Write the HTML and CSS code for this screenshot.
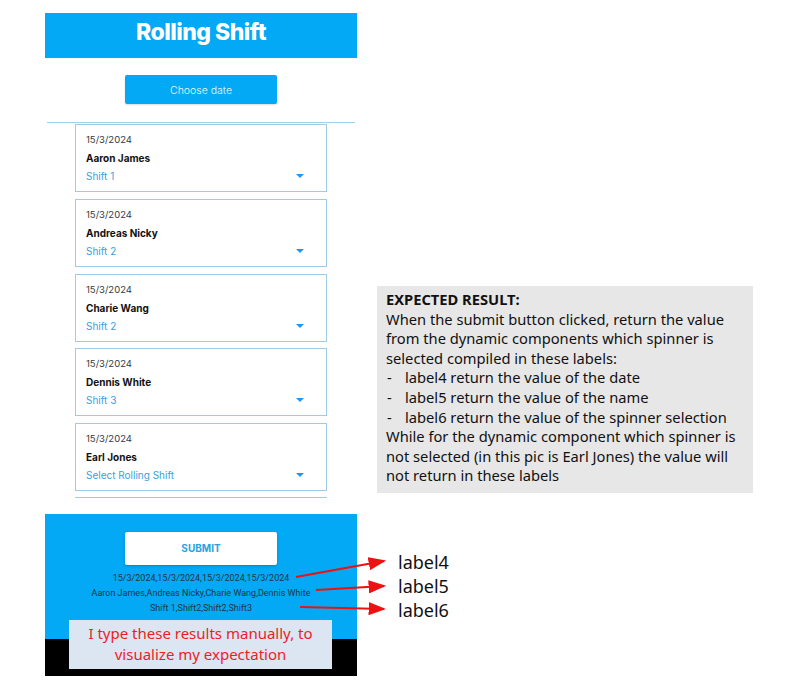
FILE: index.html
```html
<!DOCTYPE html>
<html lang="en">
<head>
    <meta charset="UTF-8">
    <title>Rolling Shift</title>
    <link rel="stylesheet" href="styles.css">
</head>
<body>
    <div class="page">
        <div class="phone">
            <header class="app-bar">
                <h1>Rolling Shift</h1>
            </header>
            <div class="date-row">
                <button class="btn-date">Choose date</button>
            </div>
            <hr class="divider">
            <div class="shift-list">
                <div class="shift-card">
                    <div class="shift-date">15/3/2024</div>
                    <div class="shift-name">Aaron James</div>
                    <div class="shift-spinner"><span>Shift 1</span><i class="caret"></i></div>
                </div>
                <div class="shift-card">
                    <div class="shift-date">15/3/2024</div>
                    <div class="shift-name">Andreas Nicky</div>
                    <div class="shift-spinner"><span>Shift 2</span><i class="caret"></i></div>
                </div>
                <div class="shift-card">
                    <div class="shift-date">15/3/2024</div>
                    <div class="shift-name">Charie Wang</div>
                    <div class="shift-spinner"><span>Shift 2</span><i class="caret"></i></div>
                </div>
                <div class="shift-card">
                    <div class="shift-date">15/3/2024</div>
                    <div class="shift-name">Dennis White</div>
                    <div class="shift-spinner"><span>Shift 3</span><i class="caret"></i></div>
                </div>
                <div class="shift-card">
                    <div class="shift-date">15/3/2024</div>
                    <div class="shift-name">Earl Jones</div>
                    <div class="shift-spinner"><span>Select Rolling Shift</span><i class="caret"></i></div>
                </div>
                <div class="list-end"></div>
            </div>
            <footer class="bottom">
                <div class="bottom-blue">
                    <button class="btn-submit">SUBMIT</button>
                    <div class="result" id="label4">15/3/2024,15/3/2024,15/3/2024,15/3/2024</div>
                    <div class="result" id="label5">Aaron James,Andreas Nicky,Charie Wang,Dennis White</div>
                    <div class="result" id="label6">Shift 1,Shift2,Shift2,Shift3</div>
                </div>
                <div class="bottom-black"></div>
                <div class="annotation">I type these results manually, to<br>visualize my expectation</div>
            </footer>
        </div>
        <div class="side">
            <div class="expected">
                <strong>EXPECTED RESULT:</strong>
                <p>When the submit button clicked, return the value from the dynamic components which spinner is selected compiled in these labels:</p>
                <ul>
                    <li>label4 return the value of the date</li>
                    <li>label5 return the value of the name</li>
                    <li>label6 return the value of the spinner selection</li>
                </ul>
                <p>While for the dynamic component which spinner is not selected (in this pic is Earl Jones) the value will not return in these labels</p>
            </div>
            <div class="labels">
                <div>label4</div>
                <div>label5</div>
                <div>label6</div>
            </div>
        </div>
        <svg class="arrows" width="788" height="691" viewBox="0 0 788 691">
            <defs>
                <marker id="head" markerWidth="8" markerHeight="6" refX="7" refY="3" orient="auto" markerUnits="strokeWidth">
                    <path d="M0,0 L8,3 L0,6 z" fill="#ee1111"/>
                </marker>
            </defs>
            <line x1="296" y1="577" x2="384" y2="561" stroke="#ee1111" stroke-width="2.2" marker-end="url(#head)"/>
            <line x1="316" y1="590" x2="384" y2="586" stroke="#ee1111" stroke-width="2.2" marker-end="url(#head)"/>
            <line x1="300" y1="607" x2="384" y2="609" stroke="#ee1111" stroke-width="2.2" marker-end="url(#head)"/>
        </svg>
    </div>
</body>
</html>
```

FILE: styles.css
```css
* { box-sizing: border-box; }
body {
    margin: 0;
    background: #fff;
    font-family: 'Inter', 'Noto Sans', sans-serif;
}
.page {
    position: relative;
    width: 788px;
    height: 691px;
    display: flex;
    align-items: flex-start;
    padding: 13px 0 0 45px;
}
.phone {
    position: relative;
    width: 312px;
    background: #fff;
}
.app-bar {
    height: 45px;
    background: #03a9f4;
    display: flex;
    justify-content: center;
    align-items: center;
    padding-bottom: 8px;
}
.app-bar h1 {
    margin: 0;
    color: #fff;
    font-size: 23px;
    font-weight: 800;
    letter-spacing: -0.5px;
}
.date-row {
    display: flex;
    justify-content: center;
    padding-top: 17px;
}
.btn-date {
    width: 152px;
    height: 29px;
    border: none;
    border-radius: 2px;
    background: #03a9f4;
    color: #eaf7ff;
    font-family: 'Inter', sans-serif;
    font-size: 10.5px;
    font-weight: 300;
    padding-top: 3px;
    box-shadow: 0 1px 2px rgba(0,0,0,0.15);
}
.divider {
    margin: 18px 2px 0;
    border: none;
    border-top: 1.5px solid #9fd2e6;
}
.shift-list {
    padding: 1px 30px 0;
    display: flex;
    flex-direction: column;
    gap: 6.75px;
}
.shift-card {
    height: 68px;
    border: 1.5px solid #9ccde4;
    padding: 9px 20px 0 10px;
}
.shift-date {
    font-size: 9.5px;
    color: #3a3a3a;
    line-height: 12px;
}
.shift-name {
    margin-top: 6px;
    font-size: 10px;
    font-weight: 700;
    color: #111;
    line-height: 12px;
}
.shift-spinner {
    margin-top: 6px;
    display: flex;
    justify-content: space-between;
    align-items: center;
    font-size: 10px;
    line-height: 12px;
    color: #3aa0e0;
}
.caret {
    width: 0;
    height: 0;
    margin-right: 2px;
    border-left: 4px solid transparent;
    border-right: 4px solid transparent;
    border-top: 4px solid #2196f3;
}
.list-end {
    height: 1px;
    border-top: 1.5px solid #9ccde4;
    margin-top: -1px;
}
.bottom {
    position: relative;
    margin-top: 16px;
}
.bottom-blue {
    height: 125px;
    background: #03a9f4;
    display: flex;
    flex-direction: column;
    align-items: center;
    padding-top: 18px;
}
.btn-submit {
    width: 152px;
    height: 33px;
    border: none;
    border-radius: 2px;
    background: #fff;
    color: #2aa2de;
    font-family: 'Inter', sans-serif;
    font-size: 10px;
    font-weight: 700;
    margin-bottom: 6px;
    box-shadow: 0 1px 3px rgba(0,0,0,0.2);
}
.result {
    font-family: 'Roboto', sans-serif;
    font-size: 9px;
    line-height: 15px;
    color: #223344;
}
.bottom-black {
    height: 37px;
    background: #000;
}
.annotation {
    position: absolute;
    left: 24px;
    top: 106px;
    width: 263px;
    height: 49px;
    background: #dce6f2;
    color: #ee1c25;
    font-family: 'Noto Sans', sans-serif;
    font-size: 15px;
    line-height: 21px;
    text-align: center;
    padding-top: 3px;
}
.side {
    margin-left: 20px;
    margin-top: 273px;
    display: flex;
    flex-direction: column;
}
.expected {
    width: 376px;
    height: 207px;
    background: #e7e7e7;
    padding: 4px 6px 0 9px;
    font-family: 'Noto Sans', sans-serif;
    font-size: 14.7px;
    line-height: 19.6px;
    color: #111;
}
.expected strong {
    display: block;
}
.expected p {
    margin: 0;
}
.expected ul {
    margin: 0;
    padding: 0;
    list-style: none;
}
.expected li {
    position: relative;
    padding-left: 19px;
}
.expected li::before {
    content: "-";
    position: absolute;
    left: 1px;
}
.labels {
    margin-top: 57px;
    padding-left: 21px;
    font-family: 'Noto Sans', sans-serif;
    font-size: 18px;
    line-height: 24px;
    color: #111;
}
.arrows {
    position: absolute;
    left: 0;
    top: 0;
    pointer-events: none;
}
```
